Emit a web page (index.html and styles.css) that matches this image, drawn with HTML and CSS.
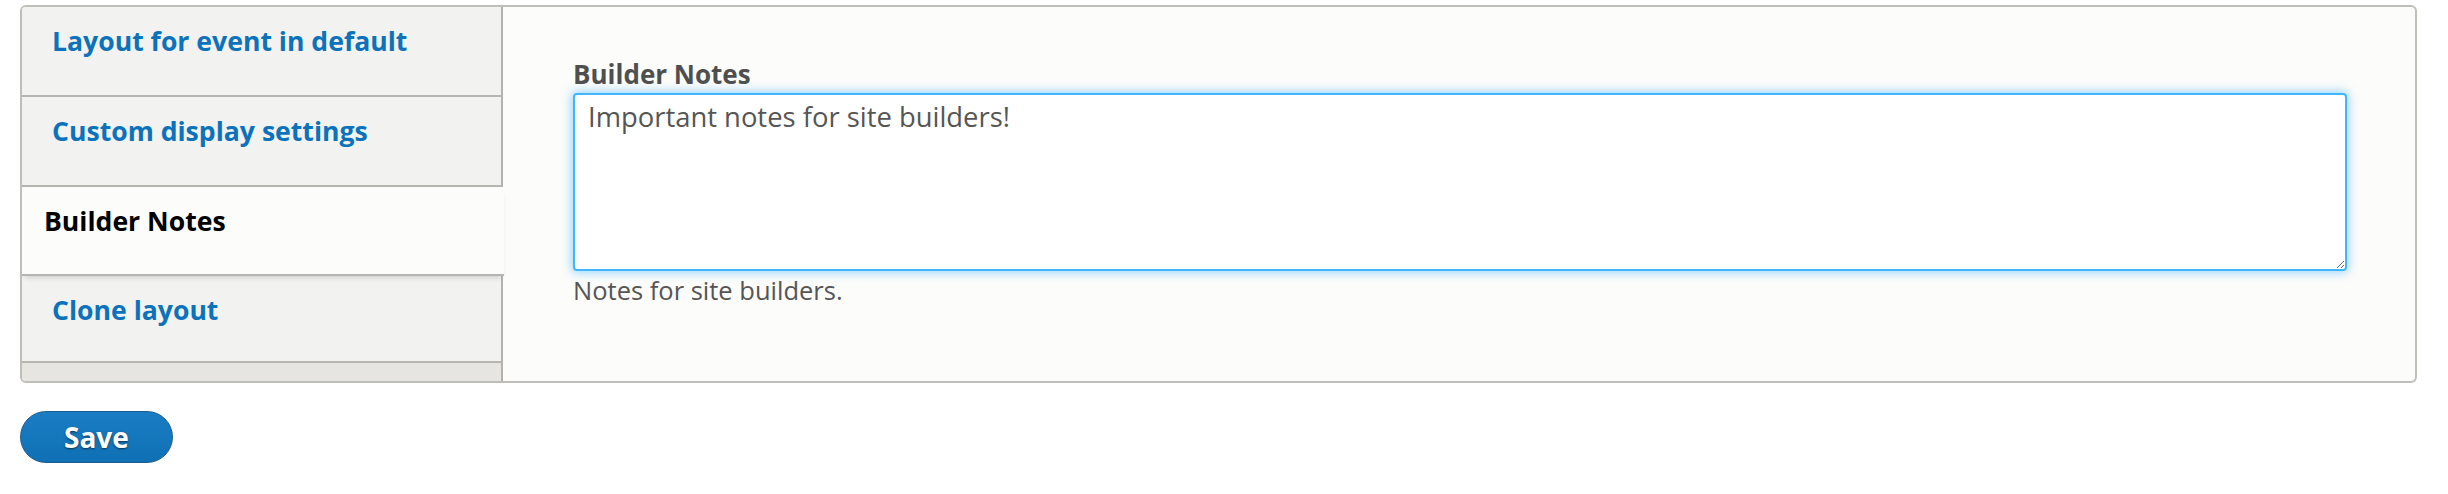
FILE: index.html
```html
<!DOCTYPE html>
<html lang="en">
<head>
<meta charset="utf-8">
<title>Builder Notes</title>
<link rel="stylesheet" href="styles.css">
</head>
<body>
<form class="page">
  <div class="vtabs">
    <ul class="vtabs-menu">
      <li class="vtab"><a class="vtab-link" href="#">Layout for event in default</a></li>
      <li class="vtab"><a class="vtab-link" href="#">Custom display settings</a></li>
      <li class="vtab vtab-active"><a class="vtab-link" href="#">Builder Notes</a></li>
      <li class="vtab"><a class="vtab-link" href="#">Clone layout</a></li>
    </ul>
    <div class="vtabs-pane">
      <label class="field-label" for="notes">Builder Notes</label>
      <textarea class="notes-input" id="notes">Important notes for site builders!</textarea>
      <div class="field-desc">Notes for site builders.</div>
    </div>
  </div>
  <div class="actions">
    <button type="button" class="btn-primary">Save</button>
  </div>
</form>
</body>
</html>
```

FILE: styles.css
```css
* {
  box-sizing: border-box;
}

html, body {
  margin: 0;
  padding: 0;
  background: #ffffff;
}

body {
  font-family: "Open Sans", "Noto Sans", sans-serif;
  color: #555555;
}

.page {
  padding: 5px 31px 0 20px;
}

.vtabs {
  display: flex;
  height: 378px;
  border: 2px solid #bfbfba;
  border-radius: 6px;
  background: #fcfcfa;
  overflow: hidden;
}

.vtabs-menu {
  flex: 0 0 481px;
  margin: 0;
  padding: 0;
  list-style: none;
  background: #e6e5e1;
  border-right: 2px solid #b3b2ad;
}

.vtab {
  height: 90px;
  background: #f2f2f0;
  border-bottom: 2px solid #b6b5b0;
  padding: 16px 20px 0 30px;
}

.vtab:last-child {
  height: 87px;
}

.vtab-link {
  display: block;
  font-size: 26.6px;
  line-height: 36px;
  font-weight: 700;
  color: #0b72bb;
  text-decoration: none;
  white-space: nowrap;
}

.vtab-active {
  position: relative;
  z-index: 1;
  height: 89px;
  margin-right: -3px;
  padding-left: 22px;
  background: #fcfcfa;
  box-shadow: 0 4px 6px -3px rgba(0, 0, 0, 0.18);
}

.vtab-active .vtab-link {
  color: #000000;
}

.vtabs-pane {
  flex: 1 1 auto;
  display: flex;
  flex-direction: column;
  padding: 49px 68px 0 70px;
}

.field-label {
  display: block;
  font-size: 26px;
  line-height: 36px;
  font-weight: 700;
  color: #4f4f4f;
  margin-bottom: 1px;
}

.notes-input {
  display: block;
  width: 100%;
  height: 178px;
  margin: 0;
  padding: 4px 13px;
  font-family: "Open Sans", "Noto Sans", sans-serif;
  font-size: 27.4px;
  line-height: 36px;
  color: #555555;
  background: #ffffff;
  border: 2px solid #40b6ff;
  border-radius: 4px;
  box-shadow: 0 0 10px 2px rgba(64, 182, 255, 0.5);
  outline: none;
}

.field-desc {
  margin-top: 2px;
  font-size: 25.5px;
  line-height: 34px;
  color: #555555;
}

.actions {
  padding-top: 28px;
}

.btn-primary {
  display: inline-block;
  margin: 0;
  padding: 7px 43px;
  font-family: "Open Sans", "Noto Sans", sans-serif;
  font-size: 28px;
  line-height: 36px;
  font-weight: 700;
  color: #ffffff;
  text-shadow: 0 1px 2px rgba(0, 0, 0, 0.55);
  background: linear-gradient(to bottom, #1a7dc4, #0f70b4);
  border: 1px solid #1e5c90;
  border-radius: 26px;
  cursor: pointer;
}
```
